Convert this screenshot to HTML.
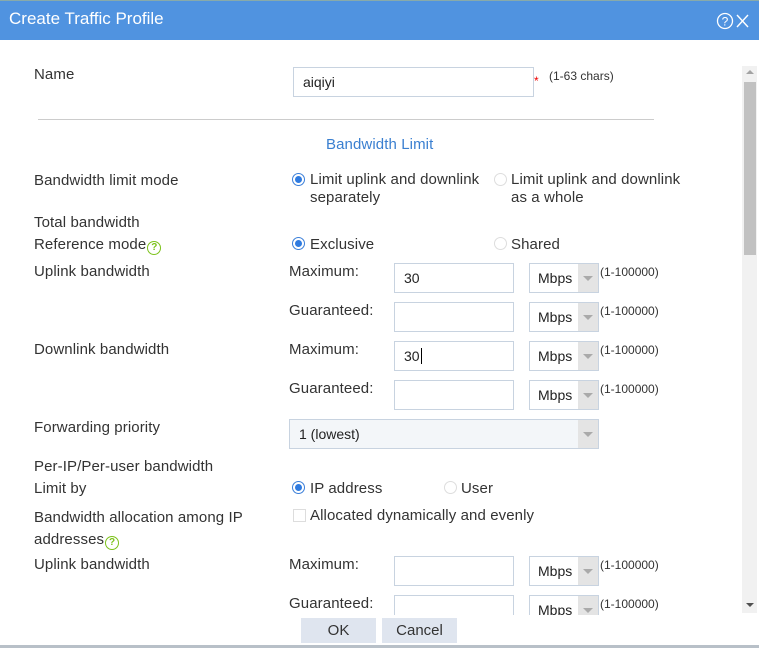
<!DOCTYPE html>
<html><head><meta charset="utf-8"><style>
*{box-sizing:border-box;margin:0;padding:0}
body{width:759px;height:648px;overflow:hidden;background:#fff;font-family:"Liberation Sans",sans-serif;font-size:14px;color:#333;position:relative}
.a{position:absolute;white-space:nowrap;line-height:18px;font-size:15px;letter-spacing:0.1px;margin-top:1px}
.hd{position:absolute;left:0;top:0;width:759px;height:40px;background:#5093e0;border-top:1px solid #8aa;}
.in{position:absolute;border:1px solid #c8d3e0;background:#fff;height:30px;padding-left:9px;line-height:28px;font-size:14px;color:#222}
.sel{position:absolute;width:70px;height:30px;border:1px solid #c8d3e0;background:#fff}
.sel span{position:absolute;left:8px;top:6px;font-size:14px;color:#222}
.sel i{position:absolute;right:0;top:0;width:20px;height:28px;background:#e4e4e4}
.sel i:after,.fs i:after{content:"";position:absolute;left:5px;top:12px;border-left:5px solid transparent;border-right:5px solid transparent;border-top:5px solid #aaa}
.rg{position:absolute;font-size:12px;color:#333}
.r{position:absolute;width:13px;height:13px;border-radius:50%;border:1px solid #ddd;background:#fff}
.r.on{border-color:#3b7fd9}
.r.on:after{content:"";position:absolute;left:2px;top:2px;width:7px;height:7px;border-radius:50%;background:#2f7be0}
.q{display:inline-block;width:14px;height:14px;border-radius:50%;border:1.5px solid #7cc21b;color:#7cc21b;font-size:10px;line-height:11px;text-align:center;font-weight:bold;vertical-align:-1px;margin-left:1px;letter-spacing:0}
.btn{position:absolute;top:618px;height:25px;width:75px;background:#dfe5ef;text-align:center;line-height:25px;font-size:15px;color:#333}
</style></head><body>
<div class="hd"></div>
<div class="a" style="left:9px;top:8px;color:#fff;font-size:17px;line-height:20px;letter-spacing:0">Create Traffic Profile</div>
<svg style="position:absolute;left:716px;top:12px" width="36" height="18"><circle cx="9" cy="9" r="7.5" fill="none" stroke="#fff" stroke-width="1.3"/><text x="9" y="13.5" fill="#fff" font-size="12" text-anchor="middle" font-family="Liberation Sans">?</text><path d="M21 3L32 15M32 3L21 15" stroke="#fff" stroke-width="1.4"/></svg>
<div style="position:absolute;left:742px;top:66px;width:15px;height:547px;background:#f1f1f1"></div>
<div style="position:absolute;left:744px;top:82px;width:12px;height:173px;background:#c1c1c1"></div>
<div style="position:absolute;left:746px;top:70px;border-left:4px solid transparent;border-right:4px solid transparent;border-bottom:4px solid #a3a3a3"></div>
<div style="position:absolute;left:746px;top:603px;border-left:4px solid transparent;border-right:4px solid transparent;border-top:4px solid #505050"></div>

<div class="a" style="left:34px;top:65px">Name</div>
<div class="in" style="left:293px;top:67px;width:241px">aiqiyi</div>
<div class="a" style="left:534px;top:71px;color:#e00;font-size:12px">*</div>
<div class="rg" style="left:549px;top:69px">(1-63 chars)</div>
<div style="position:absolute;left:38px;top:119px;width:616px;height:1px;background:#ccc"></div>
<div class="a" style="left:326px;top:135px;color:#3a7fd0">Bandwidth Limit</div>

<div class="a" style="left:34px;top:171px">Bandwidth limit mode</div>
<div class="r on" style="left:292px;top:173px"></div>
<div class="a" style="left:310px;top:170px">Limit uplink and downlink<br>separately</div>
<div class="r" style="left:494px;top:173px"></div>
<div class="a" style="left:511px;top:170px">Limit uplink and downlink<br>as a whole</div>

<div class="a" style="left:34px;top:213px">Total bandwidth</div>
<div class="a" style="left:34px;top:235px">Reference mode<span class="q">?</span></div>
<div class="r on" style="left:292px;top:237px"></div>
<div class="a" style="left:310px;top:235px">Exclusive</div>
<div class="r" style="left:494px;top:237px"></div>
<div class="a" style="left:511px;top:235px">Shared</div>

<div class="a" style="left:34px;top:262px">Uplink bandwidth</div>
<div class="a" style="left:289px;top:262px">Maximum:</div>
<div class="in" style="left:394px;top:263px;width:120px">30</div>
<div class="sel" style="left:529px;top:263px"><span>Mbps</span><i></i></div>
<div class="rg" style="left:600px;top:265px">(1-100000)</div>
<div class="a" style="left:289px;top:301px">Guaranteed:</div>
<div class="in" style="left:394px;top:302px;width:120px"></div>
<div class="sel" style="left:529px;top:302px"><span>Mbps</span><i></i></div>
<div class="rg" style="left:600px;top:304px">(1-100000)</div>

<div class="a" style="left:34px;top:340px">Downlink bandwidth</div>
<div class="a" style="left:289px;top:340px">Maximum:</div>
<div class="in" style="left:394px;top:341px;width:120px">30<span style="border-left:1px solid #000;margin-left:1px"></span></div>
<div class="sel" style="left:529px;top:341px"><span>Mbps</span><i></i></div>
<div class="rg" style="left:600px;top:343px">(1-100000)</div>
<div class="a" style="left:289px;top:379px">Guaranteed:</div>
<div class="in" style="left:394px;top:380px;width:120px"></div>
<div class="sel" style="left:529px;top:380px"><span>Mbps</span><i></i></div>
<div class="rg" style="left:600px;top:382px">(1-100000)</div>

<div class="a" style="left:34px;top:418px">Forwarding priority</div>
<div class="fs" style="position:absolute;left:289px;top:419px;width:310px;height:30px;border:1px solid #c8d3e0;background:#f3f6f9"><span style="position:absolute;left:9px;top:6px;color:#222">1 (lowest)</span><i style="position:absolute;right:0;top:0;width:20px;height:28px;background:#e4e4e4"></i></div>

<div class="a" style="left:34px;top:457px">Per-IP/Per-user bandwidth</div>
<div class="a" style="left:34px;top:479px">Limit by</div>
<div class="r on" style="left:292px;top:481px"></div>
<div class="a" style="left:310px;top:479px">IP address</div>
<div class="r" style="left:444px;top:481px"></div>
<div class="a" style="left:461px;top:479px">User</div>

<div class="a" style="left:34px;top:506px;line-height:22px">Bandwidth allocation among IP<br>addresses<span class="q">?</span></div>
<div style="position:absolute;left:293px;top:509px;width:13px;height:13px;border:1px solid #ddd"></div>
<div class="a" style="left:310px;top:506px">Allocated dynamically and evenly</div>

<div class="a" style="left:34px;top:555px">Uplink bandwidth</div>
<div class="a" style="left:289px;top:555px">Maximum:</div>
<div class="in" style="left:394px;top:556px;width:120px"></div>
<div class="sel" style="left:529px;top:556px"><span>Mbps</span><i></i></div>
<div class="rg" style="left:600px;top:558px">(1-100000)</div>
<div style="position:absolute;left:0;top:594px;width:740px;height:21px;overflow:hidden">
<div class="a" style="left:289px;top:0px">Guaranteed:</div>
<div class="in" style="left:394px;top:1px;width:120px"></div>
<div class="sel" style="left:529px;top:1px"><span>Mbps</span><i></i></div>
<div class="rg" style="left:600px;top:3px">(1-100000)</div>
</div>
<div class="btn" style="left:301px">OK</div>
<div class="btn" style="left:382px">Cancel</div>
<div style="position:absolute;left:0;top:645px;width:759px;height:3px;background:#b8c0c8"></div>
</body></html>
